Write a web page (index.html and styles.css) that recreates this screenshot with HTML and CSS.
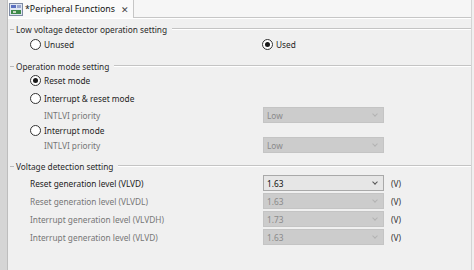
FILE: index.html
```html
<!DOCTYPE html>
<html lang="en">
<head>
    <meta charset="UTF-8">
    <title>Peripheral Functions</title>
    <link rel="stylesheet" href="styles.css">
</head>
<body>
    <div class="window">
        <div class="side"></div>
        <div class="main">
            <div class="tabbar">
                <div class="tab">
                    <svg class="tab-icon" width="14" height="13" viewBox="0 0 14 13">
                        <rect x="0.5" y="0.5" width="13" height="12" fill="#dfe6f2" stroke="#7d8aa3"/>
                        <rect x="2" y="2" width="5" height="3" fill="#5a6fc0"/>
                        <rect x="8" y="2" width="4" height="3" fill="#9aa6cf"/>
                        <rect x="2" y="7" width="10" height="4" fill="#3f8a4a"/>
                        <rect x="4" y="8" width="3" height="2" fill="#c9d9c4"/>
                    </svg>
                    <span class="tab-title">*Peripheral Functions</span>
                    <span class="tab-close">&#x2715;</span>
                </div>
            </div>

            <div class="panel">
                <div class="group-title first"><span>Low voltage detector operation setting</span></div>
                <div class="radios">
                    <label class="radio"><span class="dot"></span>Unused</label>
                    <label class="radio"><span class="dot on"></span>Used</label>
                </div>

                <div class="group-title second"><span>Operation mode setting</span></div>
                <div class="row"><label class="radio"><span class="dot on"></span>Reset mode</label></div>
                <div class="row gap"><label class="radio"><span class="dot"></span>Interrupt &amp; reset mode</label></div>
                <div class="row sub">
                    <span class="label disabled">INTLVI priority</span>
                    <div class="combo off"><span>Low</span><span class="arrow"></span></div>
                </div>
                <div class="row"><label class="radio"><span class="dot"></span>Interrupt mode</label></div>
                <div class="row sub flush">
                    <span class="label disabled">INTLVI priority</span>
                    <div class="combo off"><span>Low</span><span class="arrow"></span></div>
                </div>

                <div class="group-title third"><span>Voltage detection setting</span></div>
                <div class="levels">
                    <div class="level">
                        <span class="label">Reset generation level (VLVD)</span>
                        <div class="combo"><span>1.63</span><span class="arrow"></span></div>
                        <span class="unit">(V)</span>
                    </div>
                    <div class="level">
                        <span class="label disabled">Reset generation level (VLVDL)</span>
                        <div class="combo off"><span>1.63</span><span class="arrow"></span></div>
                        <span class="unit">(V)</span>
                    </div>
                    <div class="level">
                        <span class="label disabled">Interrupt generation level (VLVDH)</span>
                        <div class="combo off"><span>1.73</span><span class="arrow"></span></div>
                        <span class="unit">(V)</span>
                    </div>
                    <div class="level">
                        <span class="label disabled">Interrupt generation level (VLVD)</span>
                        <div class="combo off"><span>1.63</span><span class="arrow"></span></div>
                        <span class="unit">(V)</span>
                    </div>
                </div>
            </div>
        </div>
    </div>
</body>
</html>
```

FILE: styles.css
```css
body {
    margin: 0;
    font-family: "Noto Sans", "DejaVu Sans", sans-serif;
    font-size: 8.3px;
    color: #1e1e1e;
    background-color: #f0f0f0;
}

.window {
    display: flex;
    width: 474px;
    height: 270px;
    overflow: hidden;
}

.side {
    width: 7px;
    background-color: #d5d5d5;
    border-right: 1px solid #bdbdbd;
}

.main {
    flex: 1;
    display: flex;
    flex-direction: column;
    border-right: 1px solid #d4d4d4;
    margin-right: 2px;
}

.tabbar {
    height: 17px;
    background-color: #f6f6f6;
    border-bottom: 1px solid #c6c6c6;
    box-shadow: 0 1px 0 #ffffff;
    display: flex;
    align-items: flex-end;
}

.tab {
    display: flex;
    align-items: center;
    width: 126px;
    height: 18px;
    margin-bottom: -1px;
    padding-left: 1px;
    background-color: #fafafa;
    border-right: 1px solid #c6c6c6;
    box-sizing: border-box;
}

.tab-icon {
    margin-right: 2px;
}

.tab-title {
    font-size: 8.8px;
    color: #111;
    margin-right: 6px;
}

.tab-close {
    font-size: 9px;
    color: #444;
}

.panel {
    flex: 1;
    padding: 1px 0 0 2px;
}

.group-title {
    display: flex;
    align-items: center;
    height: 14px;
    color: #2a2a2a;
}

.group-title::before {
    content: "";
    width: 4px;
    border-top: 1px solid #b9b9b9;
    margin-right: 2px;
}

.group-title::after {
    content: "";
    flex: 1;
    border-top: 1px solid #c4c4c4;
    border-bottom: 1px solid #ffffff;
    margin-left: 5px;
}

.group-title.first {
    margin-top: 3px;
}

.group-title.second {
    margin-top: 8px;
}

.group-title.third {
    margin-top: 6px;
}

.radios {
    display: grid;
    grid-template-columns: 232px auto;
    align-items: center;
    height: 14px;
    margin-top: 1px;
    padding-left: 20px;
}

.row {
    display: flex;
    align-items: center;
    height: 14px;
    padding-left: 20px;
}

.row.gap {
    margin-top: 4px;
}

.row.sub {
    padding-left: 34px;
    height: 16px;
    margin-top: 2px;
}

.row.sub.flush {
    margin-top: 0;
}

.radio {
    display: flex;
    align-items: center;
    gap: 3px;
}

.dot {
    width: 11px;
    height: 11px;
    border: 1px solid #333;
    border-radius: 50%;
    background-color: #fff;
    box-sizing: border-box;
    display: flex;
    align-items: center;
    justify-content: center;
}

.dot.on::after {
    content: "";
    width: 5px;
    height: 5px;
    border-radius: 50%;
    background-color: #1a1a1a;
}

.label {
    color: #222;
}

.label.disabled {
    color: #767676;
}

.row.sub .label {
    width: 219px;
}

.combo {
    width: 121px;
    height: 16px;
    box-sizing: border-box;
    border: 1px solid #a9a9a9;
    background-color: #e6e6e6;
    display: flex;
    align-items: center;
    justify-content: space-between;
    padding: 0 6px 0 3px;
    color: #111;
}

.combo.off {
    background-color: #cccccc;
    border-color: #c4c4c4;
    color: #8a8a8a;
}

.arrow {
    width: 3px;
    height: 3px;
    border-right: 1px solid #555;
    border-bottom: 1px solid #555;
    transform: rotate(45deg);
    margin-top: -2px;
}

.combo.off .arrow {
    border-color: #b3b3b3;
}

.levels {
    margin-top: 1px;
}

.level {
    display: grid;
    grid-template-columns: 233px 121px auto;
    align-items: center;
    height: 18px;
    padding-left: 20px;
}

.unit {
    margin-left: 7px;
    color: #333;
}
```
